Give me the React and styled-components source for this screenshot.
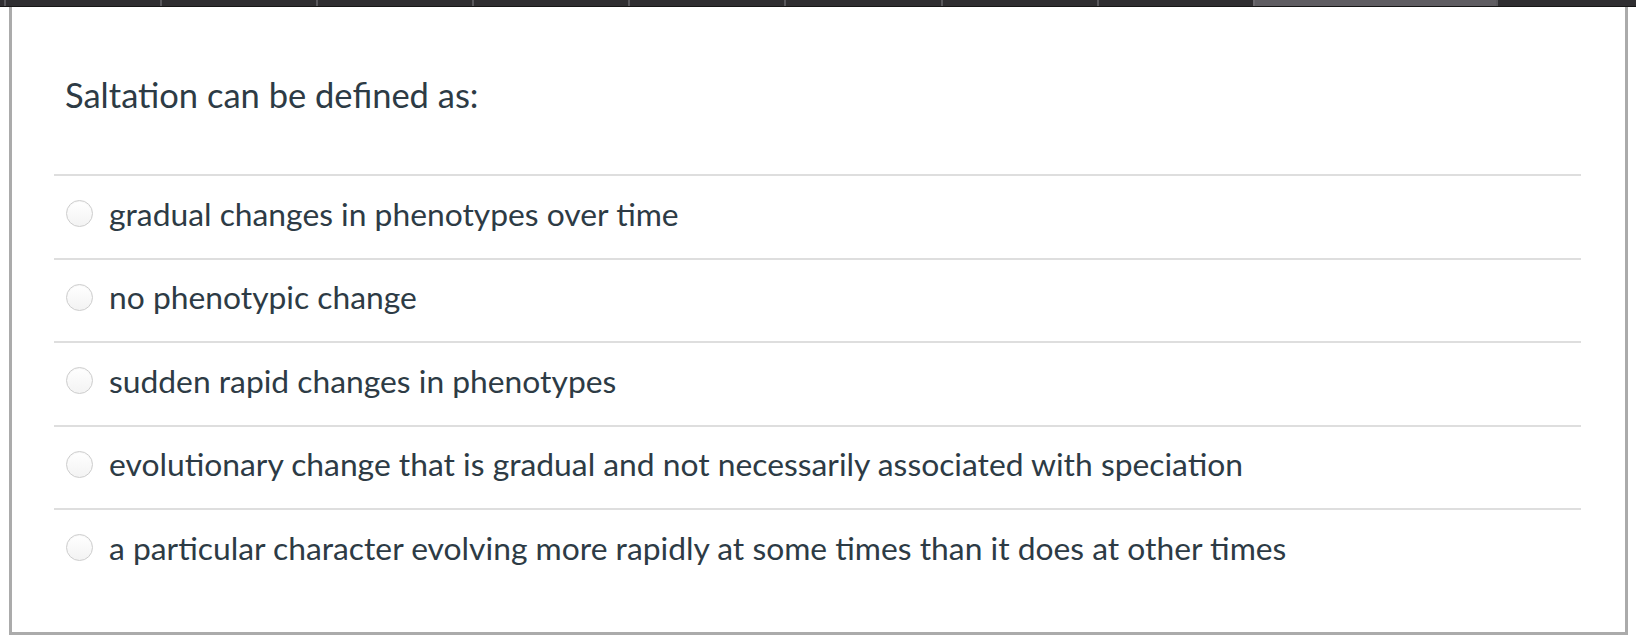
import React from 'react';
import styled, { createGlobalStyle } from 'styled-components';

const GlobalStyle = createGlobalStyle`
  html, body {
    margin: 0;
    padding: 0;
    background: #ffffff;
  }
  body {
    font-family: 'Lato', 'Open Sans', sans-serif;
  }
`;

const Page = styled.div`
  width: 1636px;
  height: 636px;
  display: flex;
  flex-direction: column;
  overflow: hidden;
`;

// Dark tab strip at the very top
const TabStrip = styled.div`
  height: 6px;
  display: flex;
  background: #2f2e31;
  border-bottom: 1px solid #161616;
  padding-left: 4px;
`;

const Tab = styled.div`
  width: ${props => props.width}px;
  flex: none;
  height: 100%;
  box-sizing: border-box;
  border-left: 2px solid ${props => (props.active ? '#6b696e' : '#58575b')};
  background: ${props => (props.active ? '#5f5d62' : 'transparent')};
`;

const Frame = styled.div`
  flex: 1;
  margin: 0 8px 1px 9px;
  border: 3px solid #ababab;
  border-top: none;
  padding: 0 44px 0 42px;
  background: #fff;
  color: #2d3b45;
`;

const Question = styled.div`
  font-size: 34.5px;
  line-height: 40px;
  padding: 68px 0 0 11px;
  margin-bottom: 59px;
`;

const Answers = styled.div`
  display: flex;
  flex-direction: column;
`;

const Answer = styled.label`
  height: 83.5px;
  box-sizing: border-box;
  border-top: 2px solid #dedede;
  display: flex;
  align-items: center;
  gap: 16px;
  padding: 0 0 6px 12px;
  font-size: 31.8px;
`;

const Radio = styled.span`
  width: 27px;
  height: 27px;
  flex: none;
  box-sizing: border-box;
  border-radius: 50%;
  border: 1.5px solid #cdcdcd;
  background: linear-gradient(#ffffff, #f3f3f3);
  box-shadow: inset 0 1px 1px rgba(0, 0, 0, 0.04);
`;

const tabs = [
  { w: 156 }, { w: 156 }, { w: 156 }, { w: 156 }, { w: 156 },
  { w: 157 }, { w: 156 }, { w: 156 }, { w: 243, active: true }, { w: 141 },
];

const answers = [
  'gradual changes in phenotypes over time',
  'no phenotypic change',
  'sudden rapid changes in phenotypes',
  'evolutionary change that is gradual and not necessarily associated with speciation',
  'a particular character evolving more rapidly at some times than it does at other times',
];

const App = () => {
  return (
    <Page>
      <GlobalStyle />
      <TabStrip>
        {tabs.map((t, i) => (
          <Tab key={i} width={t.w} active={t.active} />
        ))}
      </TabStrip>
      <Frame>
        <Question>Saltation can be defined as:</Question>
        <Answers>
          {answers.map((a, i) => (
            <Answer key={i}>
              <Radio />
              {a}
            </Answer>
          ))}
        </Answers>
      </Frame>
    </Page>
  );
};

export default App;
